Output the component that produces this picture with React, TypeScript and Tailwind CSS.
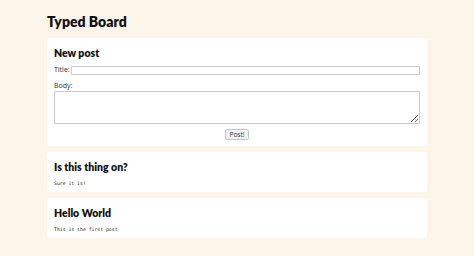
const posts = [
  { id: 2, title: 'Is this thing on?', body: 'Sure it is!' },
  { id: 1, title: 'Hello World', body: 'This is the first post' }
];

export default function App() {
  return (
    <div className="min-h-screen bg-[#fdf5ea] font-['Lato',sans-serif] text-[#111]">
      <div className="ml-[47px] w-[380px] pt-[11px]">
        <h1 className="text-[14px] font-extrabold leading-[22px]">Typed Board</h1>

        <section className="mt-[5px] rounded-[3px] bg-white px-[7px] pb-[6px] pt-[8px]">
          <h2 className="text-[10.5px] font-extrabold leading-[14px]">New post</h2>
          <form className="mt-[5px]" onSubmit={(e) => e.preventDefault()}>
            <div className="flex items-center gap-[1px] font-['Open_Sans',sans-serif] text-[7px] text-[#333]">
              <label htmlFor="title">Title:</label>
              <input id="title" className="h-[9px] flex-1 rounded-[1px] border border-[#c8c8c8] bg-white" />
            </div>
            <label htmlFor="body" className="mt-[5px] block font-['Open_Sans',sans-serif] text-[7px] leading-[10px] text-[#333]">
              Body:
            </label>
            <textarea id="body" className="block h-[33px] w-[366px] resize-y rounded-[1px] border border-[#c8c8c8] bg-white" />
            <div className="mt-[5px] flex justify-center">
              <button className="h-[11px] rounded-[2px] border border-[#c4c4c4] bg-[#f2f2f2] px-[4px] font-['Open_Sans',sans-serif] text-[6.5px] leading-[9px] text-[#333]">
                Post!
              </button>
            </div>
          </form>
        </section>

        {posts.map((post) => (
          <section key={post.id} className="mt-[6px] h-[40px] rounded-[3px] bg-white px-[7px] pt-[8px]">
            <h2 className="text-[10.5px] font-extrabold leading-[14px]">{post.title}</h2>
            <p className="mt-[6px] font-['DejaVu_Sans_Mono',monospace] text-[4.8px] leading-[8px] text-[#222]">{post.body}</p>
          </section>
        ))}
      </div>
    </div>
  );
}
